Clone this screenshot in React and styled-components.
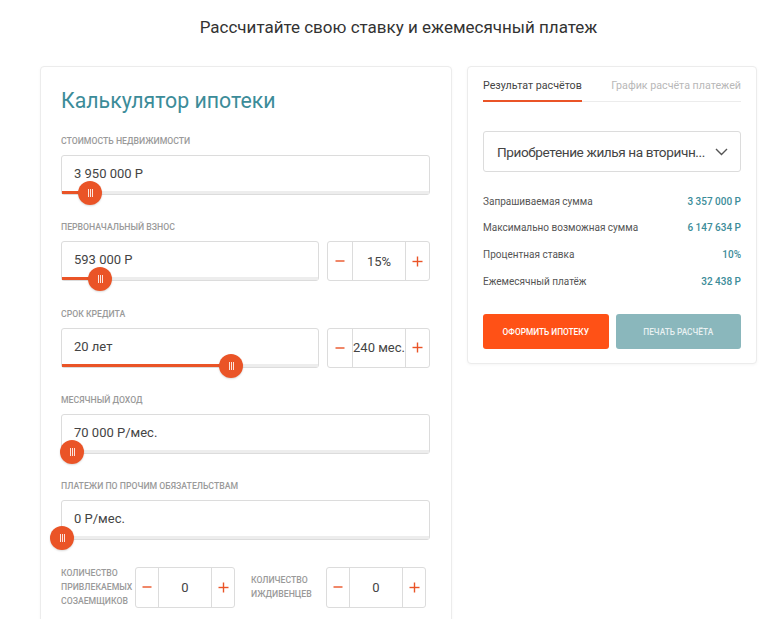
import React from "react";
import styled, { createGlobalStyle } from "styled-components";

// mortgage calculator: inputs on the left, result card on the right

const GlobalStyle = createGlobalStyle`
  body {
    margin: 0;
    background: #fff;
    font-family: Roboto, "Liberation Sans", sans-serif;
    color: #333;
  }
`;

const ORANGE = "#ea5427";
const TEAL = "#3c8c99";

const Page = styled.div`
  width: 717px;
  margin-left: 40px;
  padding-top: 15px;
`;

const Heading = styled.h1`
  margin: 0 0 27px;
  font-size: 17px;
  line-height: 24px;
  font-weight: 400;
  color: #333;
  text-align: center;
`;

const Columns = styled.div`
  display: flex;
  align-items: flex-start;
  gap: 15px;
`;

const Card = styled.div`
  box-sizing: border-box;
  width: ${(p) => p.width}px;
  background: #fff;
  border: 1px solid #ececec;
  border-radius: 4px;
  box-shadow: 0 1px 3px rgba(0, 0, 0, 0.04);
`;

const LeftCard = styled(Card)`
  padding: 21px 21px 40px 20px;
`;

const RightCard = styled(Card)`
  padding: 11px 14px 14px 14px;
`;

const CardTitle = styled.h2`
  margin: 0 0 21px;
  font-size: 21.3px;
  line-height: 26px;
  font-weight: 400;
  color: ${TEAL};
`;

const Field = styled.div`
  margin-bottom: 26.25px;
`;

const Label = styled.div`
  font-size: 8.7px;
  line-height: 12px;
  font-weight: 500;
  color: #9a9a9a;
  text-transform: uppercase;
  margin-bottom: 8px;
`;

const Row = styled.div`
  display: flex;
  gap: 8px;
`;

const InputBox = styled.div`
  position: relative;
  flex: 1;
  box-sizing: border-box;
  height: 40px;
  border: 1px solid #dcdcdc;
  border-radius: 3px;
  display: flex;
  align-items: center;
  padding: 0 0 3px 12px;
  font-size: 13px;
  color: #444;
`;

const Track = styled.div`
  position: absolute;
  left: 0;
  right: 0;
  bottom: 0;
  height: 3px;
  background: #ededed;
`;

const Fill = styled.div`
  position: absolute;
  left: 0;
  top: 0;
  height: 3px;
  background: ${ORANGE};
`;

const Thumb = styled.div`
  position: absolute;
  top: -10px;
  width: 24px;
  height: 24px;
  margin-left: -12px;
  border-radius: 50%;
  background: ${ORANGE};
  display: flex;
  align-items: center;
  justify-content: center;
  gap: 1px;
  box-shadow: 0 1px 2px rgba(0, 0, 0, 0.15);
  z-index: 2;

  span {
    width: 1px;
    height: 8px;
    background: rgba(255, 255, 255, 0.85);
  }
`;

const StepperBox = styled.div`
  box-sizing: border-box;
  display: grid;
  grid-template-columns: ${(p) => (p.small ? "23px 1fr 23px" : "25px 1fr 24px")};
  width: ${(p) => (p.small ? 100 : 103)}px;
  height: ${(p) => (p.small ? 41 : 40)}px;
  border: 1px solid #dcdcdc;
  border-radius: 3px;
  flex-shrink: 0;
`;

const StepBtn = styled.div`
  display: flex;
  align-items: center;
  justify-content: center;
  ${(p) => (p.side === "left" ? "border-right: 1px solid #dcdcdc;" : "border-left: 1px solid #dcdcdc;")}
`;

const StepValue = styled.div`
  display: flex;
  align-items: center;
  justify-content: center;
  font-size: 13px;
  color: #444;
  white-space: nowrap;
`;

const Counters = styled.div`
  display: flex;
  align-items: center;
  gap: 16px;
  margin-top: 26px;
`;

const CounterGroup = styled.div`
  display: flex;
  align-items: center;
`;

const CounterLabel = styled.div`
  width: ${(p) => p.width}px;
  font-size: 8.7px;
  line-height: 14px;
  font-weight: 500;
  color: #9a9a9a;
  text-transform: uppercase;
`;

const Tabs = styled.div`
  display: flex;
  justify-content: space-between;
  border-bottom: 1px solid #ececec;
  margin: 0 1px;
`;

const Tab = styled.div`
  font-size: 10.7px;
  line-height: 14px;
  padding: 1px 0 7px;
  margin-bottom: -1px;
  color: ${(p) => (p.active ? "#444" : "#b8b8b8")};
  border-bottom: 2px solid ${(p) => (p.active ? ORANGE : "transparent")};
`;

const Select = styled.div`
  box-sizing: border-box;
  height: 41px;
  margin: 29px 1px 16px;
  border: 1px solid #dcdcdc;
  border-radius: 3px;
  display: flex;
  align-items: center;
  justify-content: space-between;
  padding: 0 12px 0 13px;
  font-size: 13.6px;
  letter-spacing: -0.4px;
  color: #444;
  white-space: nowrap;

  svg {
    flex-shrink: 0;
  }
`;

const ResultRow = styled.div`
  display: flex;
  justify-content: space-between;
  align-items: center;
  height: 26.6px;
  margin: 0 1px;
  font-size: 10px;
  color: #555;

  b {
    font-weight: 500;
    color: ${TEAL};
  }
`;

const Buttons = styled.div`
  display: flex;
  gap: 7px;
  margin: 20px 1px 0;
`;

const Button = styled.div`
  flex: 1;
  height: 35px;
  border-radius: 3px;
  display: flex;
  align-items: center;
  justify-content: center;
  background: ${(p) => (p.primary ? "#ff5116" : "#8ab7bc")};
  color: ${(p) => (p.primary ? "#fff" : "#e8f1f2")};
  font-size: 8.3px;
  font-weight: 500;
  text-transform: uppercase;
`;

const Minus = () => (
  <svg width="10" height="10" viewBox="0 0 10 10">
    <line x1="0.5" y1="5" x2="9.5" y2="5" stroke={ORANGE} strokeWidth="1.4" />
  </svg>
);

const Plus = () => (
  <svg width="11" height="11" viewBox="0 0 11 11">
    <line x1="0.5" y1="5.5" x2="10.5" y2="5.5" stroke={ORANGE} strokeWidth="1.4" />
    <line x1="5.5" y1="0.5" x2="5.5" y2="10.5" stroke={ORANGE} strokeWidth="1.4" />
  </svg>
);

const Chevron = () => (
  <svg width="13" height="8" viewBox="0 0 13 8">
    <path d="M1 1l5.5 5.5L12 1" fill="none" stroke="#555" strokeWidth="1.4" />
  </svg>
);

const Stepper = ({ value, small }) => (
  <StepperBox small={small}>
    <StepBtn side="left">
      <Minus />
    </StepBtn>
    <StepValue>{value}</StepValue>
    <StepBtn side="right">
      <Plus />
    </StepBtn>
  </StepperBox>
);

const SliderInput = ({ value, pos }) => (
  <InputBox>
    {value}
    <Track>
      <Fill style={{ width: pos }} />
      <Thumb style={{ left: pos }}>
        <span />
        <span />
        <span />
      </Thumb>
    </Track>
  </InputBox>
);

const fields = [
  { label: "Стоимость недвижимости", value: "3 950 000 Р", pos: "28px" },
  { label: "Первоначальный взнос", value: "593 000 Р", pos: "38px", step: "15%" },
  { label: "Срок кредита", value: "20 лет", pos: "169px", step: "240 мес." },
  { label: "Месячный доход", value: "70 000 Р/мес.", pos: "10px" },
  { label: "Платежи по прочим обязательствам", value: "0 Р/мес.", pos: "0px" },
];

const results = [
  ["Запрашиваемая сумма", "3 357 000 Р"],
  ["Максимально возможная сумма", "6 147 634 Р"],
  ["Процентная ставка", "10%"],
  ["Ежемесячный платёж", "32 438 Р"],
];

const App = () => {
  return (
    <>
      <GlobalStyle />
      <Page>
        <Heading>Рассчитайте свою ставку и ежемесячный платеж</Heading>
        <Columns>
          <LeftCard width={412}>
            <CardTitle>Калькулятор ипотеки</CardTitle>
            {fields.map((f) => (
              <Field key={f.label}>
                <Label>{f.label}</Label>
                <Row>
                  <SliderInput value={f.value} pos={f.pos} />
                  {f.step && <Stepper value={f.step} />}
                </Row>
              </Field>
            ))}
            <Counters>
              <CounterGroup>
                <CounterLabel width={74}>
                  Количество привлекаемых созаемщиков
                </CounterLabel>
                <Stepper small value="0" />
              </CounterGroup>
              <CounterGroup>
                <CounterLabel width={75}>Количество иждивенцев</CounterLabel>
                <Stepper small value="0" />
              </CounterGroup>
            </Counters>
          </LeftCard>

          <RightCard width={290}>
            <Tabs>
              <Tab active>Результат расчётов</Tab>
              <Tab>График расчёта платежей</Tab>
            </Tabs>
            <Select>
              <span>Приобретение жилья на вторичн...</span>
              <Chevron />
            </Select>
            {results.map(([name, val]) => (
              <ResultRow key={name}>
                <span>{name}</span>
                <b>{val}</b>
              </ResultRow>
            ))}
            <Buttons>
              <Button primary>Оформить ипотеку</Button>
              <Button>Печать расчёта</Button>
            </Buttons>
          </RightCard>
        </Columns>
      </Page>
    </>
  );
};

export default App;
